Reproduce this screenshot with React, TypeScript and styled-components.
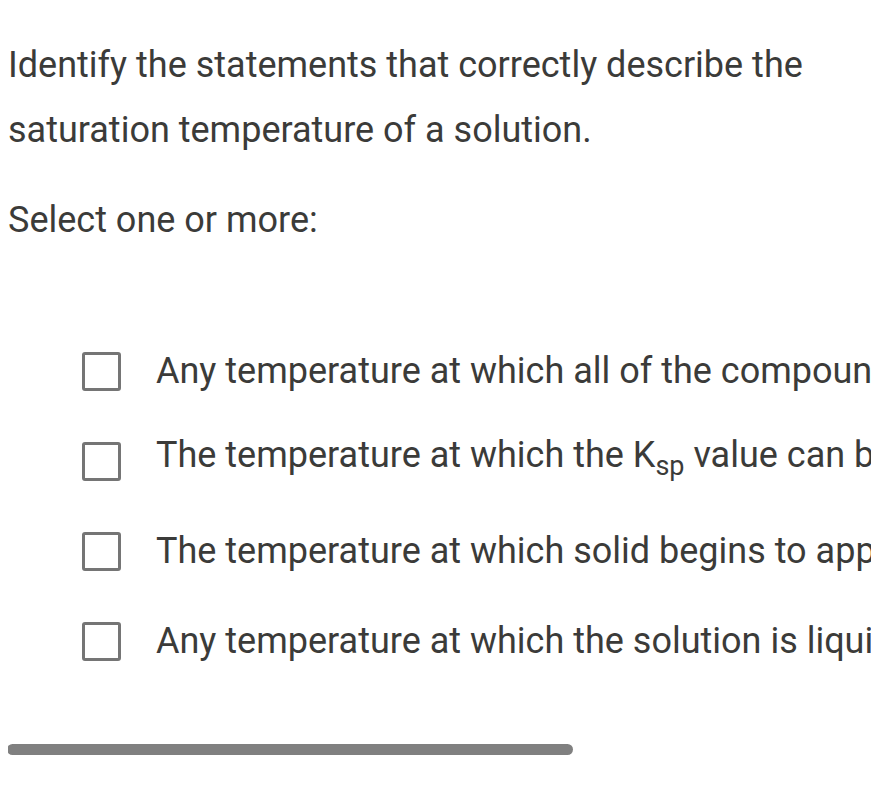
import React from 'react';
import styled, { createGlobalStyle } from 'styled-components';

const GlobalStyle = createGlobalStyle`
  body {
    margin: 8px;
    background: #ffffff;
    font-family: Roboto, "Liberation Sans", Arial, sans-serif;
    color: #3b3b39;
  }
`;

const Page = styled.div`
  width: 863px;
  overflow: hidden;
`;

const Question = styled.p`
  margin: 25px 0 0;
  font-size: 36px;
  line-height: 65px;
  white-space: nowrap;
`;

const Prompt = styled.p`
  margin: 25px 0 0;
  font-size: 36px;
  line-height: 65px;
`;

const Options = styled.div`
  margin-top: 73px;
  padding-left: 74px;
  display: flex;
  flex-direction: column;
`;

const Option = styled.label`
  height: 90px;
  display: flex;
  align-items: center;
  gap: 35px;
  white-space: nowrap;
  cursor: pointer;
`;

const Box = styled.span`
  flex: none;
  width: 39px;
  height: 39px;
  box-sizing: border-box;
  border: 3px solid #757575;
  border-radius: 3px;
  background: #fff;
`;

// text with a subscript sits a little higher than the box centre
const OptionText = styled.span<{ $hasSub?: boolean }>`
  font-size: 36px;
  line-height: 65px;
  margin-top: ${({ $hasSub }) => ($hasSub ? '-12px' : '0')};
`;

const Sub = styled.sub`
  font-size: 27px;
  vertical-align: -8px;
  line-height: 0;
`;

const ScrollBar = styled.div`
  margin: 58px 0 0 -1px;
  width: 566px;
  height: 11px;
  border-radius: 6px;
  background: #808080;
`;

const options: { text: React.ReactNode; hasSub?: boolean }[] = [
  { text: 'Any temperature at which all of the compound is dissolved in solution' },
  {
    text: (
      <>
        The temperature at which the K<Sub>sp</Sub> value can be calculated
      </>
    ),
    hasSub: true,
  },
  { text: 'The temperature at which solid begins to appear in solution' },
  { text: 'Any temperature at which the solution is liquid' },
];

const App: React.FC = () => (
  <>
    <GlobalStyle />
    <Page>
      <Question>
        Identify the statements that correctly describe the
        <br />
        saturation temperature of a solution.
      </Question>
      <Prompt>Select one or more:</Prompt>
      <Options>
        {options.map((opt, i) => (
          <Option key={i}>
            <Box />
            <OptionText $hasSub={opt.hasSub}>{opt.text}</OptionText>
          </Option>
        ))}
      </Options>
      <ScrollBar />
    </Page>
  </>
);

export default App;
